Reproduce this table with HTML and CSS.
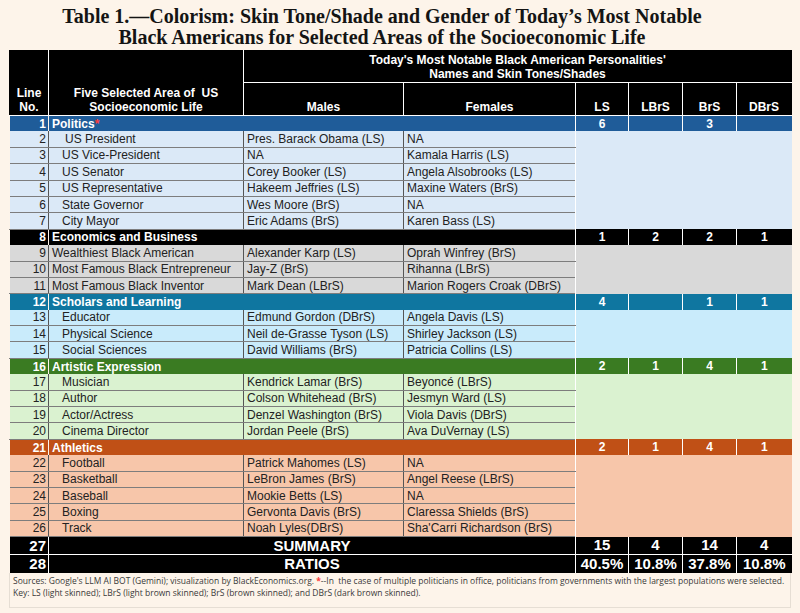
FILE: index.html
```html
<!DOCTYPE html>
<html>
<head>
<meta charset="utf-8">
<link rel="stylesheet" href="styles.css">
</head>
<body>
<div class="page">
<h1 class="title">Table 1.—Colorism: Skin Tone/Shade and Gender of Today’s Most Notable<br>Black Americans for Selected Areas of the Socioeconomic Life</h1>
<table class="tbl">
<colgroup>
<col class="c-no"><col class="c-area"><col class="c-m"><col class="c-f"><col class="c-ls"><col class="c-lb"><col class="c-br"><col class="c-db">
</colgroup>
<thead>
<tr class="hr1">
<th rowspan="2" class="hb">Line<br>No.</th>
<th rowspan="2" class="hb">Five Selected Area of&nbsp; US<br>Socioeconomic Life</th>
<th colspan="6" class="htop">Today's Most Notable Black American Personalities'<br>Names and Skin Tones/Shades</th>
</tr>
<tr class="hr2"><th>Males</th><th>Females</th><th>LS</th><th>LBrS</th><th>BrS</th><th>DBrS</th></tr>
</thead>
<tbody>
<tr class="sh pol"><td class="no">1</td><td colspan="3" class="lbl">Politics<span class="ast">*</span></td><td class="ct">6</td><td class="ct"></td><td class="ct">3</td><td class="ct"></td></tr>
<tr class="dr pol"><td class="no">2</td><td class="area in2">US President</td><td class="nm">Pres. Barack Obama (LS)</td><td class="nm">NA</td><td colspan="4" rowspan="6" class="blank"></td></tr>
<tr class="dr pol"><td class="no">3</td><td class="area in">US Vice-President</td><td class="nm">NA</td><td class="nm">Kamala Harris (LS)</td></tr>
<tr class="dr pol"><td class="no">4</td><td class="area in">US Senator</td><td class="nm">Corey Booker (LS)</td><td class="nm">Angela Alsobrooks (LS)</td></tr>
<tr class="dr pol"><td class="no">5</td><td class="area in">US Representative</td><td class="nm">Hakeem Jeffries (LS)</td><td class="nm">Maxine Waters (BrS)</td></tr>
<tr class="dr pol"><td class="no">6</td><td class="area in">State Governor</td><td class="nm">Wes Moore (BrS)</td><td class="nm">NA</td></tr>
<tr class="dr pol"><td class="no">7</td><td class="area in">City Mayor</td><td class="nm">Eric Adams (BrS)</td><td class="nm">Karen Bass (LS)</td></tr>

<tr class="sh eco"><td class="no">8</td><td colspan="3" class="lbl">Economics and Business</td><td class="ct">1</td><td class="ct">2</td><td class="ct">2</td><td class="ct">1</td></tr>
<tr class="dr eco"><td class="no">9</td><td class="area">Wealthiest Black American</td><td class="nm">Alexander Karp (LS)</td><td class="nm">Oprah Winfrey (BrS)</td><td colspan="4" rowspan="3" class="blank"></td></tr>
<tr class="dr eco"><td class="no">10</td><td class="area">Most Famous Black Entrepreneur</td><td class="nm">Jay-Z (BrS)</td><td class="nm">Rihanna (LBrS)</td></tr>
<tr class="dr eco"><td class="no">11</td><td class="area">Most Famous Black Inventor</td><td class="nm">Mark Dean (LBrS)</td><td class="nm">Marion Rogers Croak (DBrS)</td></tr>

<tr class="sh sch"><td class="no">12</td><td colspan="3" class="lbl">Scholars and Learning</td><td class="ct">4</td><td class="ct"></td><td class="ct">1</td><td class="ct">1</td></tr>
<tr class="dr sch"><td class="no">13</td><td class="area in">Educator</td><td class="nm">Edmund Gordon (DBrS)</td><td class="nm">Angela Davis (LS)</td><td colspan="4" rowspan="3" class="blank"></td></tr>
<tr class="dr sch"><td class="no">14</td><td class="area in">Physical Science</td><td class="nm">Neil de-Grasse Tyson (LS)</td><td class="nm">Shirley Jackson (LS)</td></tr>
<tr class="dr sch"><td class="no">15</td><td class="area in">Social Sciences</td><td class="nm">David Williams (BrS)</td><td class="nm">Patricia Collins (LS)</td></tr>

<tr class="sh art"><td class="no">16</td><td colspan="3" class="lbl">Artistic Expression</td><td class="ct">2</td><td class="ct">1</td><td class="ct">4</td><td class="ct">1</td></tr>
<tr class="dr art"><td class="no">17</td><td class="area in">Musician</td><td class="nm">Kendrick Lamar (BrS)</td><td class="nm">Beyoncé (LBrS)</td><td colspan="4" rowspan="4" class="blank"></td></tr>
<tr class="dr art"><td class="no">18</td><td class="area in">Author</td><td class="nm">Colson Whitehead (BrS)</td><td class="nm">Jesmyn Ward (LS)</td></tr>
<tr class="dr art"><td class="no">19</td><td class="area in">Actor/Actress</td><td class="nm">Denzel Washington (BrS)</td><td class="nm">Viola Davis (DBrS)</td></tr>
<tr class="dr art"><td class="no">20</td><td class="area in">Cinema Director</td><td class="nm">Jordan Peele (BrS)</td><td class="nm">Ava DuVernay (LS)</td></tr>

<tr class="sh ath"><td class="no">21</td><td colspan="3" class="lbl">Athletics</td><td class="ct">2</td><td class="ct">1</td><td class="ct">4</td><td class="ct">1</td></tr>
<tr class="dr ath"><td class="no">22</td><td class="area in">Football</td><td class="nm">Patrick Mahomes (LS)</td><td class="nm">NA</td><td colspan="4" rowspan="5" class="blank"></td></tr>
<tr class="dr ath"><td class="no">23</td><td class="area in">Basketball</td><td class="nm">LeBron James (BrS)</td><td class="nm">Angel Reese (LBrS)</td></tr>
<tr class="dr ath"><td class="no">24</td><td class="area in">Baseball</td><td class="nm">Mookie Betts (LS)</td><td class="nm">NA</td></tr>
<tr class="dr ath"><td class="no">25</td><td class="area in">Boxing</td><td class="nm">Gervonta Davis (BrS)</td><td class="nm">Claressa Shields (BrS)</td></tr>
<tr class="dr ath"><td class="no">26</td><td class="area in">Track</td><td class="nm">Noah Lyles(DBrS)</td><td class="nm">Sha'Carri Richardson (BrS)</td></tr>

<tr class="sum s1"><td class="no">27</td><td colspan="3" class="slbl">SUMMARY</td><td class="ct">15</td><td class="ct">4</td><td class="ct">14</td><td class="ct">4</td></tr>
<tr class="sum s2"><td class="no">28</td><td colspan="3" class="slbl">RATIOS</td><td class="ct">40.5%</td><td class="ct">10.8%</td><td class="ct">37.8%</td><td class="ct">10.8%</td></tr>
</tbody>
</table>
<div class="notes">
<p>Sources: Google's LLM AI BOT (Gemini); visualization by BlackEconomics.org. <span class="ast">*</span>--In&nbsp; the case of multiple politicians in office, politicians from governments with the largest populations were selected.</p>
<p>Key: LS (light skinned); LBrS (light brown skinned); BrS (brown skinned); and DBrS (dark brown skinned).</p>
</div>
</div>
</body>
</html>
```
FILE: styles.css
```css
html, body {
  margin: 0;
  padding: 0;
  background: #fdf4ea;
}
.page {
  padding: 6px 9px 0 9px;
  width: 782px;
}
.title {
  margin: 0 0 2px 0;
  padding-right: 36px;
  font-family: "Liberation Serif", "Times New Roman", serif;
  font-weight: bold;
  font-size: 20px;
  line-height: 21px;
  text-align: center;
  color: #141414;
}
.tbl {
  width: 782px;
  border-collapse: collapse;
  table-layout: fixed;
  font-family: "Liberation Sans", Arial, sans-serif;
  font-size: 12px;
  color: #222;
}
.c-no { width: 39px; }
.c-area { width: 195px; }
.c-m { width: 160px; }
.c-f { width: 172px; }
.c-ls { width: 53px; }
.c-lb { width: 54px; }
.c-br { width: 54px; }
.c-db { width: 55px; }

.tbl th {
  background: #000;
  color: #fff;
  font-weight: bold;
  font-size: 12px;
  line-height: 14px;
  border: 1px solid #fff;
  padding: 0 2px 1px 2px;
  vertical-align: bottom;
  text-align: center;
}
.tbl thead tr:first-child th:first-child { border-left-color: #000; }
.tbl thead tr th:last-child { border-right-color: #000; }
.tbl thead tr:first-child th { border-top-color: #000; }
.hr1 { height: 32px; }
.hr2 { height: 33px; }
.htop { vertical-align: middle !important; padding-top: 1px !important; }

.tbl td {
  padding: 0 3px;
  height: 15.4px;
  line-height: 14px;
  white-space: nowrap;
  overflow: hidden;
  vertical-align: middle;
}
.no { text-align: right; padding-right: 2px !important; }

.sh td {
  color: #fff;
  font-weight: bold;
  border-left: 1px solid transparent;
}
.sh .ct { border-left: 1px solid #fff; text-align: center; }
.sh .lbl { padding-left: 3px; }
.ast { color: #ff3c3c; font-weight: bold; }

.dr td {
  border-bottom: 1px solid #7d7d7d;
}
.dr .no { border-right: 1px solid #555; }
.dr .area { border-right: 1px solid #555; }
.dr .nm:nth-child(3) { border-right: 1px solid #555; }
.dr .blank { border-left: 1px solid #fff; border-bottom: none; }
.in { padding-left: 13px !important; }
.in2 { padding-left: 16px !important; }

.sh.pol td { background: #1f5c99; }
.dr.pol td { background: #dbe9f7; }
.sh.eco td { background: #000; }
.dr.eco td { background: #d9d9d9; }
.sh.sch td { background: #0f76a0; }
.dr.sch td { background: #c9ebfb; }
.sh.art td { background: #3a7b22; }
.dr.art td { background: #daf2d0; }
.sh.ath td { background: #c05016; }
.dr.ath td { background: #f7c6aa; }

.sum td {
  background: #000;
  color: #fff;
  font-weight: bold;
  font-size: 15px;
  text-align: center;
  border-left: 1px solid #fff;
}
.sum td:first-child { border-left: none; text-align: right; }
.sum.s1 td { height: 17px; border-bottom: 1px solid #fff; }
.sum.s2 td { height: 18px; }

.notes {
  border: 1px solid #e6ded4;
  border-top: none;
  padding: 2px 3px 8px 3px;
  font-family: "Open Sans", "Noto Sans", sans-serif;
  font-size: 8.5px;
  line-height: 12px;
  color: #3a3a3a;
}
.notes p { margin: 0; white-space: nowrap; }
```
